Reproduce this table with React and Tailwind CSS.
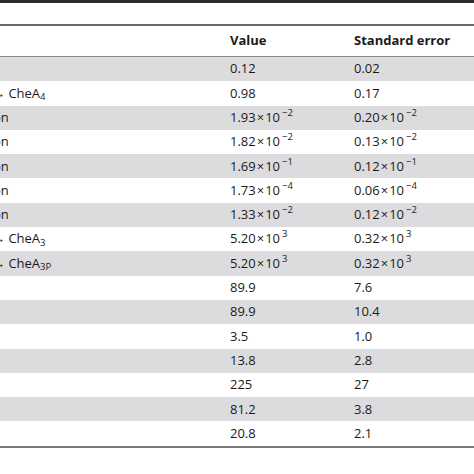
import React from "react";

const rows = [
  { label: null, v: "0.12", e: "0.02" },
  { label: "cheA4", v: "0.98", e: "0.17" },
  { label: "on", v: ["1.93", "−2"], e: ["0.20", "−2"] },
  { label: "on", v: ["1.82", "−2"], e: ["0.13", "−2"] },
  { label: "on", v: ["1.69", "−1"], e: ["0.12", "−1"] },
  { label: "on", v: ["1.73", "−4"], e: ["0.06", "−4"] },
  { label: "on", v: ["1.33", "−2"], e: ["0.12", "−2"] },
  { label: "cheA3", v: ["5.20", "3"], e: ["0.32", "3"] },
  { label: "cheA3P", v: ["5.20", "3"], e: ["0.32", "3"] },
  { label: null, v: "89.9", e: "7.6" },
  { label: null, v: "89.9", e: "10.4" },
  { label: null, v: "3.5", e: "1.0" },
  { label: null, v: "13.8", e: "2.8" },
  { label: null, v: "225", e: "27" },
  { label: null, v: "81.2", e: "3.8" },
  { label: null, v: "20.8", e: "2.1" },
];

function Num({ n }) {
  if (typeof n === "string") return <span>{n}</span>;
  return (
    <span>
      {n[0]}
      <span className="mx-[1px]">×</span>10
      <sup className="text-[9.5px] relative -top-[6px] ml-[2px]">{n[1]}</sup>
    </span>
  );
}

function Label({ label }) {
  if (!label) return null;
  if (label === "on") {
    return <span className="block -ml-[7px]">on</span>;
  }
  const sub = label === "cheA4" ? "4" : label === "cheA3" ? "3" : "3P";
  return (
    <span className="block -ml-[8px]">
      →&nbsp;CheA<sub className="text-[9.5px]">{sub}</sub>
    </span>
  );
}

export default function App() {
  return (
    <div
      className="w-[474px] h-[474px] bg-white text-[#1c1a1b] overflow-hidden"
      style={{ fontFamily: '"Open Sans", "Noto Sans", sans-serif' }}
    >
      <div className="h-[3px] bg-[#2a2a2a]" />
      <div className="h-[21px]" />
      <div className="h-[2px] bg-[#6b6b6b]" />
      <div className="flex items-center h-[31px] border-b border-[#8a8a8a] text-[13px] font-bold">
        <div className="w-[230px]" />
        <div className="w-[124px]">Value</div>
        <div>Standard error</div>
      </div>
      <div className="text-[13px]">
        {rows.map((r, i) => (
          <div
            key={i}
            className={`flex items-center h-[24.3px] ${
              i % 2 === 0 ? "bg-[#dcdcde]" : "bg-white"
            }`}
          >
            <div className="w-[230px] overflow-hidden">
              <Label label={r.label} />
            </div>
            <div className="w-[124px]">
              <Num n={r.v} />
            </div>
            <div>
              <Num n={r.e} />
            </div>
          </div>
        ))}
      </div>
      <div className="h-[2px] bg-[#7a7a7a]" />
    </div>
  );
}
